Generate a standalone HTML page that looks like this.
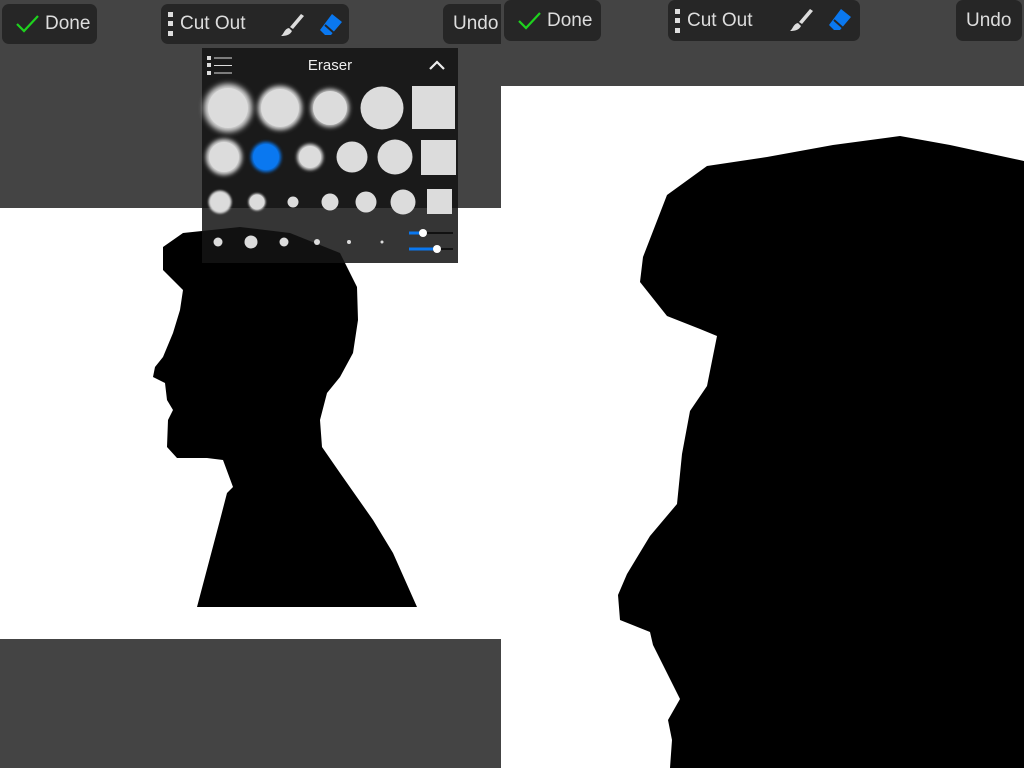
<!DOCTYPE html>
<html><head><meta charset="utf-8"><style>
*{margin:0;padding:0;box-sizing:border-box}
body{width:1024px;height:768px;overflow:hidden;background:#fff;position:relative;font-family:"Liberation Sans",sans-serif}
.abs{position:absolute}
.btn{position:absolute;background:#262626;border-radius:7px;color:#ddd;font-size:19px;display:flex;align-items:center}
.c{position:absolute;border-radius:50%;background:#dcdcdc;transform:translate(-50%,-50%)}
.s{position:absolute;background:#dcdcdc}
#L{position:absolute;left:0;top:0;width:501px;height:768px;overflow:hidden;background:#fff}
#R{position:absolute;left:501px;top:0;width:523px;height:768px;overflow:hidden;background:#fff}
</style></head><body>
<div id="R">
<div class="abs" style="left:0;top:0;width:523px;height:86px;background:#444"></div>
<svg class="abs" style="left:-501px;top:0" width="1024" height="768">
<polygon fill="#000" points="643,257 667,195 707,166 767,157 833,145 900,136 950,145 1024,161 1024,768 670,768 672,740 668,720 680,699 653,645 650,632 620,620 618,595 627,574 650,536 677,504 682,454 690,411 707,386 717,336 700,329 667,316 640,282"/>
</svg>
<div class="btn" style="left:3px;top:0;width:97px;height:41px"><svg width="28" height="20" style="margin-left:13px" viewBox="0 0 28 20"><path d="M2 10 L9 17 L23 2" fill="none" stroke="#1ed21e" stroke-width="2.2"/></svg><span style="margin-left:2px">Done</span></div>
<div class="btn" style="left:167px;top:0;width:192px;height:41px"><svg width="6" height="24" style="margin-left:7px"><rect x="0" y="0" width="5" height="5" fill="#ddd"/><rect x="0" y="9" width="5" height="5" fill="#ddd"/><rect x="0" y="19" width="5" height="5" fill="#ddd"/></svg><span style="margin-left:6px">Cut Out</span>
<svg class="abs" style="left:120px;top:7px" width="28" height="26" viewBox="0 0 28 26"><path d="M22 2 L25 4 L14 17 L11 15 Z" fill="#ddd"/><path d="M10 16 L13 19 C11 23 7 24 2 24 C5 22 5 17 10 16Z" fill="#ddd"/></svg>
<svg class="abs" style="left:158px;top:7px" width="28" height="26" viewBox="0 0 28 26"><path d="M15 2 L25 10 L14 23 L8 23 L3 18 Z" fill="#0a78f0"/><path d="M8 13 L17 21" stroke="#262626" stroke-width="2"/></svg></div>
<div class="btn" style="left:455px;top:0;width:66px;height:41px;padding-left:10px">Undo</div>
</div>
<div id="L">
<div class="abs" style="left:0;top:0;width:501px;height:208px;background:#444"></div>
<div class="abs" style="left:0;top:639px;width:501px;height:129px;background:#444"></div>
<svg class="abs" style="left:0;top:0" width="501" height="768">
<polygon fill="#000" points="163,247 183,233 240,227 290,233 340,253 357,287 358,320 353,353 340,377 327,393 320,420 322,447 340,473 373,520 393,553 417,607 197,607 220,520 227,493 233,487 223,460 207,458 177,458 167,447 168,420 173,410 167,400 165,383 153,377 155,367 163,357 173,333 180,310 183,290 163,270"/>
</svg>
<div class="btn" style="left:2px;top:4px;width:95px;height:40px"><svg width="28" height="20" style="margin-left:13px" viewBox="0 0 28 20"><path d="M2 10 L9 17 L23 2" fill="none" stroke="#1ed21e" stroke-width="2.2"/></svg><span style="margin-left:2px">Done</span></div>
<div class="btn" style="left:161px;top:4px;width:188px;height:40px"><svg width="6" height="24" style="margin-left:7px"><rect x="0" y="0" width="5" height="5" fill="#ddd"/><rect x="0" y="9" width="5" height="5" fill="#ddd"/><rect x="0" y="19" width="5" height="5" fill="#ddd"/></svg><span style="margin-left:6px">Cut Out</span>
<svg class="abs" style="left:118px;top:8px" width="28" height="26" viewBox="0 0 28 26"><path d="M22 2 L25 4 L14 17 L11 15 Z" fill="#ddd"/><path d="M10 16 L13 19 C11 23 7 24 2 24 C5 22 5 17 10 16Z" fill="#ddd"/></svg>
<svg class="abs" style="left:156px;top:8px" width="28" height="26" viewBox="0 0 28 26"><path d="M15 2 L25 10 L14 23 L8 23 L3 18 Z" fill="#0a78f0"/><path d="M8 13 L17 21" stroke="#262626" stroke-width="2"/></svg></div>
<div class="btn" style="left:443px;top:4px;width:70px;height:40px;padding-left:10px">Undo</div>
<div class="abs" style="left:202px;top:48px;width:256px;height:215px;background:rgba(20,20,20,0.86)">
<svg class="abs" style="left:5px;top:8px" width="26" height="20"><rect x="0" y="0" width="4" height="4" fill="#ddd"/><rect x="0" y="7" width="4" height="4" fill="#ddd"/><rect x="0" y="15" width="4" height="4" fill="#ddd"/><path d="M7 2H25M7 9.5H25M7 17H25" stroke="#ddd" stroke-width="1"/></svg>
<div class="abs" style="left:0;width:256px;top:9px;text-align:center;color:#eee;font-size:15px">Eraser</div>
<svg class="abs" style="left:226px;top:11px" width="18" height="12"><path d="M2 10 L9 3 L16 10" fill="none" stroke="#eee" stroke-width="2.2"/></svg>
</div>
<div class="c" style="left:228px;top:108px;width:40px;height:40px;box-shadow:0 0 6px 4px #dcdcdc"></div>
<div class="c" style="left:280px;top:108px;width:38px;height:38px;box-shadow:0 0 5px 3px #dcdcdc"></div>
<div class="c" style="left:330px;top:108px;width:34px;height:34px;box-shadow:0 0 5px 2px #dcdcdc"></div>
<div class="c" style="left:382px;top:108px;width:43px;height:43px"></div>
<div class="s" style="left:412px;top:86px;width:43px;height:43px"></div>
<div class="c" style="left:224px;top:157px;width:30px;height:30px;box-shadow:0 0 4px 3px #dcdcdc"></div>
<div class="c" style="left:266px;top:157px;width:26px;height:26px;background:#0a78f0;box-shadow:0 0 3px 2px #0a78f0"></div>
<div class="c" style="left:310px;top:157px;width:22px;height:22px;box-shadow:0 0 3px 2px #dcdcdc"></div>
<div class="c" style="left:352px;top:157px;width:31px;height:31px"></div>
<div class="c" style="left:395px;top:157px;width:35px;height:35px"></div>
<div class="s" style="left:421px;top:140px;width:35px;height:35px"></div>
<div class="c" style="left:220px;top:202px;width:19px;height:19px;box-shadow:0 0 2px 2px #dcdcdc"></div>
<div class="c" style="left:257px;top:202px;width:15px;height:15px;box-shadow:0 0 2px 1px #dcdcdc"></div>
<div class="c" style="left:293px;top:202px;width:11px;height:11px"></div>
<div class="c" style="left:330px;top:202px;width:17px;height:17px"></div>
<div class="c" style="left:366px;top:202px;width:21px;height:21px"></div>
<div class="c" style="left:403px;top:202px;width:25px;height:25px"></div>
<div class="s" style="left:427px;top:189px;width:25px;height:25px"></div>
<div class="c" style="left:218px;top:242px;width:9px;height:9px"></div>
<div class="c" style="left:251px;top:242px;width:13px;height:13px"></div>
<div class="c" style="left:284px;top:242px;width:9px;height:9px"></div>
<div class="c" style="left:317px;top:242px;width:6px;height:6px"></div>
<div class="c" style="left:349px;top:242px;width:4px;height:4px"></div>
<div class="c" style="left:382px;top:242px;width:3px;height:3px"></div>
<svg class="abs" style="left:405px;top:226px" width="50" height="30"><path d="M4 7H48" stroke="#111" stroke-width="2"/><path d="M4 7H18" stroke="#0a78f0" stroke-width="3"/><circle cx="18" cy="7" r="4" fill="#fff"/><path d="M4 23H48" stroke="#111" stroke-width="2"/><path d="M4 23H32" stroke="#0a78f0" stroke-width="3"/><circle cx="32" cy="23" r="4" fill="#fff"/></svg>
</div>
</body></html>
